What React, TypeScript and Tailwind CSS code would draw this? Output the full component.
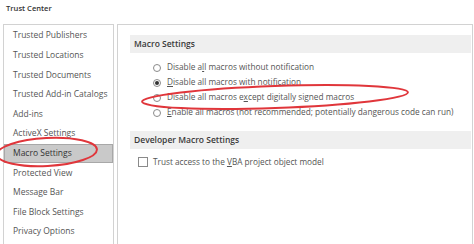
import type { ReactNode } from 'react'

const navItems = [
  'Trusted Publishers',
  'Trusted Locations',
  'Trusted Documents',
  'Trusted Add-in Catalogs',
  'Add-ins',
  'ActiveX Settings',
  'Macro Settings',
  'Protected View',
  'Message Bar',
  'File Block Settings',
  'Privacy Options',
]

const macroOptions: { label: ReactNode; checked?: boolean }[] = [
  { label: <>Disable a<u>l</u>l macros without notification</> },
  { label: <><u>D</u>isable all macros with notification</>, checked: true },
  { label: <>Disable all macros e<u>x</u>cept digitally signed macros</> },
  { label: <><u>E</u>nable all macros (not recommended; potentially dangerous code can run)</> },
]

function Radio({ checked }: { checked?: boolean }) {
  return (
    <span className="flex h-[8px] w-[8px] shrink-0 items-center justify-center rounded-full border border-[#8a8a8a] bg-white">
      {checked && <span className="h-[4px] w-[4px] rounded-full bg-[#333]" />}
    </span>
  )
}

function SectionHeader({ children }: { children: ReactNode }) {
  return (
    <div className="flex h-[18px] items-center bg-[#efefef] pl-[4px] text-[8.5px] font-semibold text-[#3a3a3a]">
      {children}
    </div>
  )
}

export default function App() {
  return (
    <div
      className="relative h-[244px] w-[474px] overflow-hidden bg-white text-[#444]"
      style={{ fontFamily: '"Open Sans", "Noto Sans", sans-serif' }}
    >
      <div className="flex h-[24px] items-start pl-[6px] pt-[3px] text-[7.6px] font-semibold text-[#333]">Trust Center</div>

      <div className="flex h-[240px] gap-[3px] pl-[3px] pr-[1px]">
        <div className="w-[111px] shrink-0 border border-[#d2d2d2] pt-[1px]">
          {navItems.map((item) =>
            item === 'Macro Settings' ? (
              <div key={item} className="flex h-[19.6px] items-center border border-[#a8a8a8] bg-[#c9c9c9] pl-[8px] text-[8.5px] text-[#333]">
                {item}
              </div>
            ) : (
              <div key={item} className="flex h-[19.6px] items-center pl-[9px] text-[8.5px] text-[#555]">
                {item}
              </div>
            ),
          )}
        </div>

        <div className="flex-1 border border-[#d2d2d2] pl-[12px] pr-[1px] pt-[10px]">
          <SectionHeader>Macro Settings</SectionHeader>
          <div className="mt-[7px] pl-[23px]">
            {macroOptions.map((opt, i) => (
              <div key={i} className="flex h-[15px] items-center gap-[6px] text-[8.25px] text-[#555]">
                <Radio checked={opt.checked} />
                <span className="whitespace-nowrap">{opt.label}</span>
              </div>
            ))}
          </div>

          <div className="mt-[11px]">
            <SectionHeader>Developer Macro Settings</SectionHeader>
          </div>
          <div className="mt-[4px] flex h-[18px] items-center gap-[5px] pl-[8px] text-[8.25px] text-[#555]">
            <span className="h-[10px] w-[10px] shrink-0 border border-[#8a8a8a] bg-white" />
            <span className="whitespace-nowrap">
              Trust access to the <u>V</u>BA project object model
            </span>
          </div>
        </div>
      </div>

      <svg className="pointer-events-none absolute left-0 top-0" width="474" height="244" viewBox="0 0 474 244">
        <ellipse cx="47" cy="152" rx="50" ry="14" fill="none" stroke="#e0363b" strokeWidth="2" transform="rotate(-3 47 152)" />
        <ellipse cx="275" cy="97" rx="133" ry="11" fill="none" stroke="#e0363b" strokeWidth="2" transform="rotate(-2 275 97)" />
      </svg>
    </div>
  )
}
